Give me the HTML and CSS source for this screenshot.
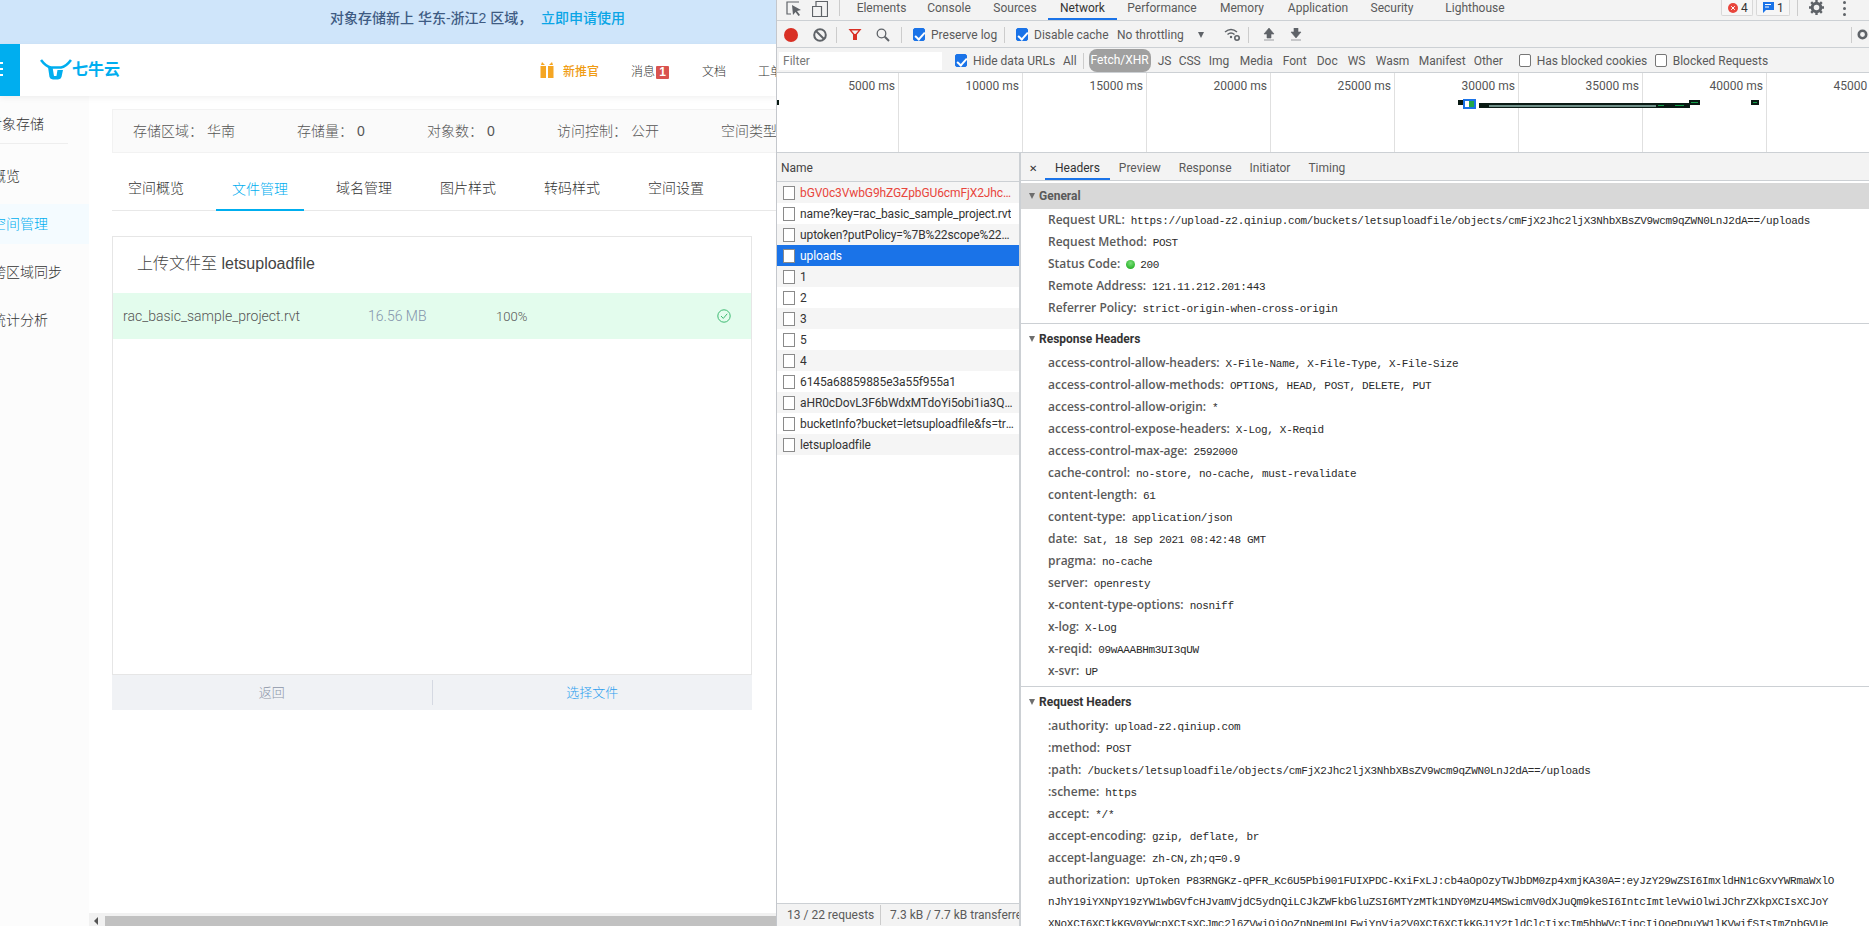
FILE: index.html
```html
<!DOCTYPE html>
<html>
<head>
    <meta charset="UTF-8">
    <title>七牛云 - 上传文件</title>
    <link rel="stylesheet" href="styles.css">
</head>
<body>
<div class="app">
    <!-- Left: the qiniu page -->
    <div class="page">
        <div class="banner">
            <span class="banner-text">对象存储新上 华东-浙江2 区域，</span><a class="banner-link">立即申请使用</a>
        </div>
        <div class="topbar">
            <div class="menu-btn"><i></i><i></i><i></i></div>
            <div class="logo">
                <svg width="32" height="22" viewBox="0 0 32 22">
                    <path d="M1 1 C4 5 7 8 11 8.5 H21 C25 8 28 5 31 1" fill="none" stroke="#00aeef" stroke-width="2.6"/>
                    <path d="M8 8 L9.5 18 Q10 20.5 13 20.5 H18 Q21 20.5 21.5 18 L23 11 H17.5 L16.5 17 H14 L12.5 8 Z" fill="#00aeef"/>
                </svg>
                <span class="logo-text">七牛云</span>
            </div>
            <div class="topnav">
                <svg class="gift" width="14" height="16" viewBox="0 0 14 16">
                    <path d="M2 0 L5 3 H1 Z M12 0 L9 3 H13 Z" fill="#f5a623"/>
                    <rect x="0.5" y="4" width="5.5" height="12" fill="#f5a623"/>
                    <rect x="8" y="4" width="5.5" height="12" fill="#f5a623"/>
                </svg>
                <span class="nav-promo">新推官</span>
                <span class="nav-msg">消息<b class="msg-badge">1</b></span>
                <span class="nav-doc">文档</span>
                <span class="nav-ticket">工单</span>
            </div>
        </div>
        <div class="main">
            <div class="sidebar">
                <div class="side-title">对象存储</div>
                <div class="side-item">概览</div>
                <div class="side-item active">空间管理</div>
                <div class="side-item">跨区域同步</div>
                <div class="side-item">统计分析</div>
            </div>
            <div class="content-wrap">
                <div class="content">
                    <div class="info-bar">
                        <span class="info-a">存储区域： 华南</span>
                        <span class="info-b">存储量： 0</span>
                        <span class="info-c">对象数： 0</span>
                        <span class="info-d">访问控制： 公开</span>
                        <span class="info-e">空间类型：</span>
                    </div>
                    <div class="tabs">
                        <span class="tab">空间概览</span>
                        <span class="tab active">文件管理</span>
                        <span class="tab">域名管理</span>
                        <span class="tab">图片样式</span>
                        <span class="tab">转码样式</span>
                        <span class="tab">空间设置</span>
                    </div>
                    <div class="upload-card">
                        <div class="card-title">上传文件至 letsuploadfile</div>
                        <div class="file-row">
                            <span class="file-name">rac_basic_sample_project.rvt</span>
                            <span class="file-size">16.56 MB</span>
                            <span class="file-pct">100%</span>
                            <svg class="file-ok" width="14" height="14" viewBox="0 0 14 14">
                                <circle cx="7" cy="7" r="6.2" fill="none" stroke="#3dba72" stroke-width="1"/>
                                <path d="M4 7 L6.3 9.4 L10.2 4.8" fill="none" stroke="#3dba72" stroke-width="1"/>
                            </svg>
                        </div>
                        <div class="card-body"></div>
                    </div>
                    <div class="card-footer">
                        <span class="foot-btn">返回</span>
                        <span class="foot-btn primary">选择文件</span>
                    </div>
                </div>
                <div class="hscroll"><span class="hscroll-arrow"></span><span class="hscroll-thumb"></span></div>
            </div>
        </div>
    </div>

    <!-- Right: devtools -->
    <div class="devtools">
        <div class="dt-tabs">
            <svg class="dt-icon first" width="16" height="16" viewBox="0 0 16 16">
                <path d="M13 1 H1 V13 H5" fill="none" stroke="#5f6368" stroke-width="1.2"/>
                <path d="M6 4 L15 9 L11 10 L14 14 L12.5 15 L9.5 11 L7 14 Z" fill="#5f6368"/>
            </svg>
            <svg class="dt-icon" width="16" height="16" viewBox="0 0 16 16">
                <path d="M0.5 5.5 H9.5 V15.5 H0.5 Z M4 5 V0.5 H15.5 V15.5 H10" fill="none" stroke="#5f6368" stroke-width="1.2"/>
            </svg>
            <span class="dt-sep tabs-sep"></span>
            <div class="dt-tablist">
                <span>Elements</span><span>Console</span><span>Sources</span><span class="on">Network</span><span>Performance</span><span>Memory</span><span>Application</span><span>Security</span><span>Lighthouse</span>
            </div>
            <div class="dt-right">
                <span class="count-box err-box">
                    <svg width="10" height="10" viewBox="0 0 10 10"><circle cx="5" cy="5" r="5" fill="#e8453c"/><path d="M3.2 3.2 L6.8 6.8 M6.8 3.2 L3.2 6.8" stroke="#fff" stroke-width="1"/></svg>4
                </span>
                <span class="count-box msg-box">
                    <svg width="11" height="11" viewBox="0 0 11 11"><path d="M0 0 H11 V8 H3 L0 11 Z" fill="#1a73e8"/><path d="M2 2.5 H8 M2 5 H6" stroke="#fff" stroke-width="1"/></svg>1
                </span>
                <span class="dt-sep right-sep"></span>
                <svg class="gear" width="15" height="15" viewBox="0 0 15 15">
                    <circle cx="7.5" cy="7.5" r="4.3" fill="none" stroke="#5f6368" stroke-width="3"/>
                    <path d="M7.5 0 V15 M0 7.5 H15 M2.2 2.2 L12.8 12.8 M12.8 2.2 L2.2 12.8" stroke="#5f6368" stroke-width="2.4" stroke-dasharray="2.6 9.8"/>
                </svg>
                <span class="dots"><i></i><i></i><i></i></span>
            </div>
        </div>

        <div class="dt-toolbar">
            <span class="rec"></span>
            <svg class="stop" width="14" height="14" viewBox="0 0 14 14">
                <circle cx="7" cy="7" r="5.8" fill="none" stroke="#5f6368" stroke-width="2"/>
                <path d="M3 3 L11 11" stroke="#5f6368" stroke-width="2"/>
            </svg>
            <span class="dt-sep sep-a"></span>
            <svg class="funnel" width="14" height="13" viewBox="0 0 14 13">
                <path d="M0.5 1 H13.5 L9 6.5 V12 H5 V6.5 Z M3.5 2.5 L6.5 6 H7.5 L10.5 2.5 Z" fill="#d93025" fill-rule="evenodd"/>
            </svg>
            <svg class="search" width="14" height="14" viewBox="0 0 14 14">
                <circle cx="5.5" cy="5.5" r="4.3" fill="none" stroke="#5f6368" stroke-width="1.3"/>
                <path d="M8.8 8.8 L13 13" stroke="#5f6368" stroke-width="2"/>
            </svg>
            <span class="dt-sep sep-b"></span>
            <label class="check-label tb-a"><span class="cb on"></span>Preserve log</label>
            <span class="dt-sep sep-c"></span>
            <label class="check-label tb-b"><span class="cb on"></span>Disable cache</label>
            <span class="throttle">No throttling</span>
            <span class="tri-down"></span>
            <svg class="wifi" width="17" height="14" viewBox="0 0 17 14">
                <path d="M1 4 Q7 -1 13 4 M3.5 6.5 Q7 3.5 10.5 6.5" fill="none" stroke="#5f6368" stroke-width="1.5"/>
                <circle cx="7" cy="9" r="1.2" fill="#5f6368"/>
                <circle cx="13" cy="10" r="2.2" fill="none" stroke="#5f6368" stroke-width="1.6"/>
            </svg>
            <span class="dt-sep sep-d"></span>
            <svg class="updown up" width="12" height="13" viewBox="0 0 12 13"><path d="M6 0 L11 6 H8 V10 H4 V6 H1 Z M1 12 H11" fill="#5f6368" stroke="#5f6368" stroke-width="0.6"/></svg>
            <svg class="updown down" width="12" height="13" viewBox="0 0 12 13"><path d="M4 0 H8 V4 H11 L6 10 L1 4 H4 Z M1 12 H11" fill="#5f6368" stroke="#5f6368" stroke-width="0.6"/></svg>
            <span class="dt-sep sep-e"></span>
            <svg class="gear small" width="13" height="13" viewBox="0 0 15 15">
                <circle cx="7.5" cy="7.5" r="4.3" fill="none" stroke="#5f6368" stroke-width="3"/>
            </svg>
        </div>

        <div class="dt-filter">
            <div class="filter-input">Filter</div>
            <label class="check-label hide-urls"><span class="cb on"></span>Hide data URLs</label>
            <span class="type t-all">All</span>
            <span class="dt-sep sep-f"></span>
            <span class="type pill">Fetch/XHR</span>
            <span class="type t-js">JS</span>
            <span class="type t-css">CSS</span>
            <span class="type t-img">Img</span>
            <span class="type t-media">Media</span>
            <span class="type t-font">Font</span>
            <span class="type t-doc">Doc</span>
            <span class="type t-ws">WS</span>
            <span class="type t-wasm">Wasm</span>
            <span class="type t-man">Manifest</span>
            <span class="type t-other">Other</span>
            <label class="check-label blocked"><span class="cb"></span>Has blocked cookies</label>
            <label class="check-label blocked-b"><span class="cb"></span>Blocked Requests</label>
        </div>

        <div class="overview">
            <div class="tick">5000 ms</div>
            <div class="tick">10000 ms</div>
            <div class="tick">15000 ms</div>
            <div class="tick">20000 ms</div>
            <div class="tick">25000 ms</div>
            <div class="tick">30000 ms</div>
            <div class="tick">35000 ms</div>
            <div class="tick">40000 ms</div>
            <div class="tick">45000 ms</div>
            <!-- waterfall marks sit on the time axis -->
            <span class="mark m0"></span>
            <span class="mark m1"></span>
            <span class="sel"><i></i></span>
            <span class="mark long"><i></i><u class="g1"></u><u class="g2"></u></span>
            <span class="mark m2"><u></u></span>
            <span class="mark m3"><u></u></span>
        </div>

        <div class="split">
            <div class="names">
                <div class="names-head">Name</div>
                <div class="name-list">
                    <div class="req err"><span class="file-ic"></span><span class="req-name">bGV0c3VwbG9hZGZpbGU6cmFjX2Jhc2ljX3NhbXBsZV9wcm9qZWN0LnJ2dA</span></div>
                    <div class="req"><span class="file-ic"></span><span class="req-name">name?key=rac_basic_sample_project.rvt</span></div>
                    <div class="req"><span class="file-ic"></span><span class="req-name">uptoken?putPolicy=%7B%22scope%22%3A%22letsuploadfile</span></div>
                    <div class="req sel-row"><span class="file-ic"></span><span class="req-name">uploads</span></div>
                    <div class="req"><span class="file-ic"></span><span class="req-name">1</span></div>
                    <div class="req"><span class="file-ic"></span><span class="req-name">2</span></div>
                    <div class="req"><span class="file-ic"></span><span class="req-name">3</span></div>
                    <div class="req"><span class="file-ic"></span><span class="req-name">5</span></div>
                    <div class="req"><span class="file-ic"></span><span class="req-name">4</span></div>
                    <div class="req"><span class="file-ic"></span><span class="req-name">6145a68859885e3a55f955a1</span></div>
                    <div class="req"><span class="file-ic"></span><span class="req-name">aHR0cDovL3F6bWdxMTdoYi5obi1ia3QuY2xvdWRkbi5jb20</span></div>
                    <div class="req"><span class="file-ic"></span><span class="req-name">bucketInfo?bucket=letsuploadfile&amp;fs=true&amp;region=z2</span></div>
                    <div class="req"><span class="file-ic"></span><span class="req-name">letsuploadfile</span></div>
                </div>
                <div class="names-foot"><span class="foot-a">13 / 22 requests</span><span class="foot-b">7.3 kB / 7.7 kB transferred</span></div>
            </div>
            <div class="details">
                <div class="det-tabs">
                    <span class="det-close">✕</span>
                    <span class="det-tab on">Headers</span>
                    <span class="det-tab">Preview</span>
                    <span class="det-tab">Response</span>
                    <span class="det-tab">Initiator</span>
                    <span class="det-tab">Timing</span>
                </div>
                <div class="section general">
                    <div class="sec-head grey">General</div>
                    <div class="row"><b>Request URL:</b>https://upload-z2.qiniup.com/buckets/letsuploadfile/objects/cmFjX2Jhc2ljX3NhbXBsZV9wcm9qZWN0LnJ2dA==/uploads</div>
                    <div class="row"><b>Request Method:</b>POST</div>
                    <div class="row"><b>Status Code:</b><span class="dot-ok"></span>200</div>
                    <div class="row"><b>Remote Address:</b>121.11.212.201:443</div>
                    <div class="row"><b>Referrer Policy:</b>strict-origin-when-cross-origin</div>
                </div>
                <div class="section">
                    <div class="sec-head">Response Headers</div>
                    <div class="row"><b>access-control-allow-headers:</b>X-File-Name, X-File-Type, X-File-Size</div>
                    <div class="row"><b>access-control-allow-methods:</b>OPTIONS, HEAD, POST, DELETE, PUT</div>
                    <div class="row"><b>access-control-allow-origin:</b>*</div>
                    <div class="row"><b>access-control-expose-headers:</b>X-Log, X-Reqid</div>
                    <div class="row"><b>access-control-max-age:</b>2592000</div>
                    <div class="row"><b>cache-control:</b>no-store, no-cache, must-revalidate</div>
                    <div class="row"><b>content-length:</b>61</div>
                    <div class="row"><b>content-type:</b>application/json</div>
                    <div class="row"><b>date:</b>Sat, 18 Sep 2021 08:42:48 GMT</div>
                    <div class="row"><b>pragma:</b>no-cache</div>
                    <div class="row"><b>server:</b>openresty</div>
                    <div class="row"><b>x-content-type-options:</b>nosniff</div>
                    <div class="row"><b>x-log:</b>X-Log</div>
                    <div class="row"><b>x-reqid:</b>09wAAABHm3UI3qUW</div>
                    <div class="row"><b>x-svr:</b>UP</div>
                </div>
                <div class="section last">
                    <div class="sec-head">Request Headers</div>
                    <div class="row"><b>:authority:</b>upload-z2.qiniup.com</div>
                    <div class="row"><b>:method:</b>POST</div>
                    <div class="row"><b>:path:</b>/buckets/letsuploadfile/objects/cmFjX2Jhc2ljX3NhbXBsZV9wcm9qZWN0LnJ2dA==/uploads</div>
                    <div class="row"><b>:scheme:</b>https</div>
                    <div class="row"><b>accept:</b>*/*</div>
                    <div class="row"><b>accept-encoding:</b>gzip, deflate, br</div>
                    <div class="row"><b>accept-language:</b>zh-CN,zh;q=0.9</div>
                    <div class="row"><b>authorization:</b>UpToken P83RNGKz-qPFR_Kc6U5Pbi901FUIXPDC-KxiFxLJ:cb4aOpOzyTWJbDM0zp4xmjKA30A=:eyJzY29wZSI6ImxldHN1cGxvYWRmaWxlO</div>
                    <div class="row">nJhY19iYXNpY19zYW1wbGVfcHJvamVjdC5ydnQiLCJkZWFkbGluZSI6MTYzMTk1NDY0MzU4MSwicmV0dXJuQm9keSI6IntcImtleVwiOlwiJChrZXkpXCIsXCJoY</div>
                    <div class="row">XNoXCI6XCIkKGV0YWcpXCIsXCJmc2l6ZVwiOiQoZnNpemUpLFwiYnVja2V0XCI6XCIkKGJ1Y2tldClcIixcIm5hbWVcIjpcIiQoeDpuYW1lKVwifSIsImZpbGVUe</div>
                </div>
            </div>
        </div>
    </div>
</div>
</body>
</html>
```

FILE: styles.css
```css
* {
    box-sizing: border-box;
}
body {
    margin: 0;
    background-color: #fff;
    font-family: "Liberation Sans", "Noto Sans CJK SC", sans-serif;
}
.app {
    display: flex;
    width: 1869px;
    height: 926px;
    overflow: hidden;
}

/* left page */
.page {
    width: 776px;
    flex: none;
    display: flex;
    flex-direction: column;
    overflow: hidden;
    background-color: #fff;
}
.banner {
    height: 44px;
    flex: none;
    background-color: #cfe5fa;
    font-size: 14px;
    font-weight: 500;
    line-height: 36px;
    padding-left: 330px;
    white-space: nowrap;
}
.banner-text {
    display: inline-block;
    width: 211px;
    color: #3e5b83;
}
.banner-link {
    color: #0aa5e6;
}
.topbar {
    height: 52px;
    flex: none;
    display: flex;
    align-items: center;
    background-color: #fff;
    box-shadow: 0 2px 6px rgba(0, 0, 0, 0.06);
    position: relative;
}
.menu-btn {
    width: 20px;
    height: 52px;
    flex: none;
    background-color: #00aeef;
    display: flex;
    flex-direction: column;
    gap: 4px;
    padding-top: 18px;
}
.menu-btn i {
    display: block;
    width: 3px;
    height: 2px;
    background-color: #fff;
}
.logo {
    display: flex;
    align-items: center;
    margin-left: 20px;
    width: 80px;
    flex: none;
}
.logo-text {
    font-size: 16px;
    font-weight: 700;
    line-height: 22px;
    color: #00aeef;
    white-space: nowrap;
}
.topnav {
    display: flex;
    align-items: center;
    margin-left: 420px;
    font-size: 12px;
    font-weight: 300;
    color: #333;
    white-space: nowrap;
}
.gift {
    margin-right: 9px;
}
.nav-promo {
    color: #f09c14;
    font-weight: 500;
    width: 68px;
}
.nav-msg {
    width: 71px;
}
.msg-badge {
    display: inline-block;
    width: 13px;
    height: 13px;
    line-height: 13px;
    margin-left: 1px;
    background-color: #d9534f;
    color: #fff;
    font-weight: 700;
    text-align: center;
    border-radius: 1px;
}
.nav-doc {
    width: 56px;
}
.main {
    flex: 1;
    display: flex;
    min-height: 0;
}
.sidebar {
    width: 89px;
    flex: none;
    background-color: #fcfcfc;
    font-size: 14px;
    font-weight: 300;
    color: #333;
    white-space: nowrap;
    overflow: hidden;
    padding-top: 14px;
}
.side-title {
    margin-left: -12px;
    width: 80px;
    height: 34px;
    line-height: 28px;
    border-bottom: 1px solid #eee;
    margin-bottom: 8px;
}
.side-item {
    height: 48px;
    line-height: 48px;
    margin-left: -8px;
}
.side-item.active {
    color: #00aeef;
    background-color: #f4fbff;
    margin-left: 0;
    height: 40px;
    line-height: 40px;
    margin-top: 4px;
    margin-bottom: 4px;
    text-indent: -8px;
}
.content-wrap {
    flex: 1;
    min-width: 0;
    display: flex;
    flex-direction: column;
}
.content {
    flex: 1;
    min-height: 0;
    padding: 13px 0 0 23px;
}
.info-bar {
    width: 720px;
    height: 44px;
    display: flex;
    align-items: center;
    padding-bottom: 2px;
    background-color: #fafafa;
    border: 1px solid #f2f2f2;
    font-size: 14px;
    font-weight: 300;
    color: #555;
    white-space: nowrap;
}
.info-a { margin-left: 20px; width: 164px; }
.info-b { width: 130px; }
.info-c { width: 130px; }
.info-d { width: 164px; }
.tabs {
    width: 664px;
    height: 58px;
    display: flex;
    align-items: flex-end;
    gap: 16px;
    border-bottom: 1px solid #e8e8e8;
    margin-bottom: 25px;
    font-size: 14px;
    font-weight: 300;
    color: #333;
}
.tab {
    width: 88px;
    height: 36px;
    line-height: 28px;
    text-align: center;
    flex: none;
}
.tab.active {
    color: #00aeef;
    border-bottom: 2px solid #00aeef;
    margin-bottom: -1px;
}
.upload-card {
    width: 640px;
    height: 439px;
    border: 1px solid #e6e6e6;
    display: flex;
    flex-direction: column;
}
.card-title {
    height: 56px;
    line-height: 53px;
    padding-left: 24px;
    font-size: 16px;
    font-weight: 300;
    color: #444;
    flex: none;
}
.file-row {
    height: 46px;
    flex: none;
    display: flex;
    align-items: center;
    background-color: #e3fced;
    font-family: Roboto, sans-serif;
    font-size: 14px;
    font-weight: 300;
    color: #555;
    padding-left: 10px;
}
.file-name {
    width: 245px;
    white-space: nowrap;
    overflow: hidden;
}
.file-size {
    width: 128px;
    color: #8494ab;
}
.file-pct {
    width: 221px;
    font-size: 13px;
}
.card-footer {
    width: 640px;
    height: 35px;
    display: flex;
    align-items: center;
    background-color: #f0f2f5;
    font-size: 13px;
    font-weight: 300;
}
.foot-btn {
    flex: 1;
    text-align: center;
    color: #8d96a8;
    height: 25px;
    line-height: 25px;
}
.foot-btn.primary {
    color: #2d9fef;
    border-left: 1px solid #d5d9e2;
}
.hscroll {
    height: 13px;
    flex: none;
    display: flex;
    align-items: flex-end;
    background-color: #f1f1f1;
}
.hscroll-arrow {
    width: 16px;
    height: 10px;
    flex: none;
    position: relative;
}
.hscroll-arrow:after {
    content: "";
    position: absolute;
    left: 5px;
    top: 1px;
    border-style: solid;
    border-width: 4px 4px 4px 0;
    border-color: transparent #555 transparent transparent;
}
.hscroll-thumb {
    flex: 1;
    height: 10px;
    background-color: #c1c1c1;
}

/* devtools */
.devtools {
    flex: 1;
    min-width: 0;
    display: flex;
    flex-direction: column;
    background-color: #fff;
    border-left: 1px solid #c4c7cc;
    font-family: Roboto, "Liberation Sans", sans-serif;
    font-size: 12px;
    color: #5a5a5a;
    white-space: nowrap;
}
.dt-tabs {
    height: 21px;
    flex: none;
    display: flex;
    align-items: flex-start;
    background-color: #f3f3f3;
    border-bottom: 1px solid #ccd0d4;
}
.dt-icon {
    margin-top: 1px;
    flex: none;
}
.dt-icon.first {
    margin-left: 9px;
    margin-right: 10px;
}
.dt-sep {
    display: block;
    width: 1px;
    height: 16px;
    background-color: #ccc;
    flex: none;
}
.tabs-sep {
    margin: 0 7px 0 11px;
}
.dt-tablist {
    display: grid;
    grid-template-columns: 69px 66px 66px 69px 90px 70px 82px 66px 100px;
    height: 20px;
    line-height: 17px;
    text-align: center;
}
.dt-tablist .on {
    border-bottom: 2px solid #1a73e8;
    color: #333;
}
.dt-right {
    margin-left: auto;
    display: flex;
    align-items: flex-start;
}
.count-box {
    height: 16px;
    padding-left: 6px;
    display: flex;
    align-items: center;
    gap: 3px;
    background-color: #f6f6f6;
    border: 1px solid #d8d8d8;
    border-top: 0;
    border-radius: 0 0 2px 2px;
    color: #333;
}
.err-box {
    width: 32px;
    margin-right: 3px;
}
.msg-box {
    width: 34px;
}
.right-sep {
    margin: 0 11px 0 7px;
}
.gear.small {
    margin-left: 4px;
    flex: none;
}
.dots {
    display: flex;
    flex-direction: column;
    gap: 3px;
    margin: 1px 23px 0 19px;
}
.dots i {
    display: block;
    width: 3px;
    height: 3px;
    border-radius: 50%;
    background-color: #5f6368;
}
.dt-toolbar {
    height: 27px;
    flex: none;
    display: flex;
    align-items: center;
    background-color: #f3f3f3;
    border-bottom: 1px solid #ccd0d4;
    padding: 1px 0 0 7px;
}
.rec {
    width: 14px;
    height: 14px;
    border-radius: 50%;
    background-color: #d93025;
    flex: none;
}
.stop { margin-left: 15px; flex: none; }
.sep-a { margin-left: 9px; }
.funnel { margin-left: 11px; flex: none; }
.search { margin-left: 14px; flex: none; }
.sep-b { margin-left: 11px; }
.check-label {
    display: flex;
    align-items: center;
    gap: 6px;
    flex: none;
}
.tb-a {
    margin-left: 11px;
    width: 91px;
}
.tb-b {
    margin-left: 11px;
    width: 101px;
}
.cb {
    display: block;
    width: 12px;
    height: 13px;
    border: 1px solid #767676;
    border-radius: 2px;
    background-color: #fff;
    flex: none;
    position: relative;
}
.cb.on {
    background-color: #1a73e8;
    border-color: #1a73e8;
}
.cb.on:after {
    content: "";
    position: absolute;
    left: 3px;
    top: 0.5px;
    width: 4px;
    height: 8px;
    border: solid #fff;
    border-width: 0 2px 2px 0;
    transform: rotate(42deg);
}
.throttle { width: 90px; }
.tri-down {
    width: 0;
    height: 0;
    border-style: solid;
    border-width: 6px 3.5px 0;
    border-color: #5f6368 transparent transparent;
    flex: none;
}
.wifi { margin-left: 20px; flex: none; }
.sep-d { margin-left: 7px; }
.up { margin-left: 14px; flex: none; }
.down { margin-left: 15px; flex: none; }
.sep-e { margin-left: 549px; }
.dt-filter {
    height: 25px;
    flex: none;
    display: flex;
    align-items: center;
    background-color: #f3f3f3;
    border-bottom: 1px solid #ccd0d4;
    padding: 1px 0 0 2px;
}
.filter-input {
    width: 163px;
    height: 18px;
    line-height: 18px;
    background-color: #fff;
    padding-left: 4px;
    color: #777;
    flex: none;
}
.hide-urls { margin-left: 13px; width: 108px; }
.type { flex: none; }
.sep-f { margin: 0 5px 0 6px; }
.pill {
    width: 62px;
    height: 23px;
    line-height: 23px;
    margin-bottom: 1px;
    background-color: #a0a0a0;
    color: #fff;
    text-align: center;
    border-radius: 8px;
    margin-right: 7px;
}
.t-js { width: 21px; }
.t-css { width: 30px; }
.t-img { width: 31px; }
.t-media { width: 43px; }
.t-font { width: 34px; }
.t-doc { width: 31px; }
.t-ws { width: 28px; }
.t-wasm { width: 43px; }
.t-man { width: 55px; }
.t-other { width: 45px; }
.blocked { width: 136px; }
.overview {
    height: 80px;
    flex: none;
    display: flex;
    position: relative;
    overflow: hidden;
    border-bottom: 1px solid #ccd0d4;
    background-color: #fff;
}
.tick {
    width: 124px;
    flex: none;
    text-align: right;
    padding: 6px 3px 0 0;
    border-right: 1px solid #e0e0e0;
    color: #555;
}
.tick:first-child {
    margin-left: -2px;
}
/* bars sit on the time axis; left values are relative to the overview */
.mark {
    position: absolute;
    background-color: #0a1a14;
}
.mark u {
    position: absolute;
    top: 2px;
    height: 1px;
    background-color: #14a04a;
    left: 2px;
    right: 2px;
}
.m0 { left: 0; top: 27px; width: 2px; height: 5px; }
.m1 { left: 681px; top: 27px; width: 5px; height: 5px; }
.sel {
    position: absolute;
    left: 686px;
    top: 26px;
    width: 13px;
    height: 10px;
    background: linear-gradient(90deg, #fff 50%, #1fa64a 50%);
    border: 2px solid #1a73e8;
}
.long {
    left: 702px;
    top: 30px;
    width: 211px;
    height: 5px;
}
.long i {
    display: block;
    margin: 1.5px 34px 0 10px;
    height: 2px;
    background-color: #6f8f88;
}
.long .g1 { left: 179px; right: 26px; }
.long .g2 { left: 196px; right: 6px; }
.m2 { left: 912px; top: 27px; width: 11px; height: 5px; }
.m3 { left: 974px; top: 27px; width: 8px; height: 5px; }
.split {
    flex: 1;
    min-height: 0;
    display: flex;
}
.names {
    width: 244px;
    flex: none;
    display: flex;
    flex-direction: column;
    border-right: 2px solid #ccd0d4;
}
.names-head {
    height: 29px;
    flex: none;
    line-height: 31px;
    padding-left: 4px;
    background-color: #f3f3f3;
    border-bottom: 1px solid #ccd0d4;
    color: #444;
}
.name-list {
    flex: 1;
    min-height: 0;
}
.req {
    height: 21px;
    display: flex;
    align-items: center;
    padding: 1px 2px 0 6px;
    color: #333;
    letter-spacing: -0.1px;
}
.req:nth-child(odd) {
    background-color: #f5f5f5;
}
.req.err {
    color: #e8453c;
}
.req.sel-row {
    background-color: #1a73e8;
    color: #fff;
}
.file-ic {
    width: 12px;
    height: 14px;
    flex: none;
    background-color: #fff;
    border: 1px solid #8a8a8a;
    margin-right: 5px;
}
.req-name {
    min-width: 0;
    overflow: hidden;
    text-overflow: ellipsis;
}
.names-foot {
    height: 23px;
    flex: none;
    display: flex;
    align-items: center;
    overflow: hidden;
    background-color: #f3f3f3;
    border-top: 1px solid #ccd0d4;
    padding-left: 10px;
}
.foot-a {
    width: 94px;
    flex: none;
    line-height: 20px;
    border-right: 1px solid #ccc;
}
.foot-b {
    margin-left: 9px;
}
.details {
    flex: 1;
    min-width: 0;
    overflow: hidden;
}
.det-tabs {
    height: 28px;
    display: flex;
    align-items: stretch;
    border-bottom: 1px solid #ccd0d4;
    background-color: #f3f3f3;
    line-height: 31px;
    padding-left: 8px;
}
.det-close {
    width: 16px;
    font-size: 10px;
    color: #333;
}
.det-tab {
    padding: 0 9px;
    color: #5a5a5a;
}
.det-tab.on {
    color: #333;
    padding: 0 10px;
    border-bottom: 2px solid #1a73e8;
}
.section {
    padding-bottom: 4px;
    border-bottom: 1px solid #ccd0d4;
    padding-top: 2px;
}
.section.general {
    padding-top: 0;
    margin-top: 2px;
}
.section.last {
    border-bottom: 0;
}
.sec-head {
    height: 26px;
    line-height: 27px;
    padding-left: 18px;
    font-weight: 700;
    color: #333;
    position: relative;
}
.sec-head:before {
    content: "";
    position: absolute;
    left: 8px;
    top: 10px;
    border-style: solid;
    border-width: 6px 3.5px 0;
    border-color: #6e6e6e transparent transparent;
}
.sec-head.grey {
    background-color: #d8d8d8;
    color: #5a5a5a;
}
.row {
    height: 22px;
    line-height: 22px;
    padding-left: 27px;
    font-family: "Liberation Mono", monospace;
    font-size: 11px;
    letter-spacing: -0.31px;
    color: #2a2a2a;
    overflow: hidden;
}
.row b {
    font-family: "Open Sans", sans-serif;
    font-size: 12px;
    font-weight: 600;
    letter-spacing: 0;
    color: #5a5a5a;
    margin-right: 6px;
}
.dot-ok {
    display: inline-block;
    width: 9px;
    height: 9px;
    border-radius: 50%;
    background: radial-gradient(circle at 50% 35%, #7be07b, #0fa30f);
    margin-right: 5px;
    vertical-align: -1px;
}
```
